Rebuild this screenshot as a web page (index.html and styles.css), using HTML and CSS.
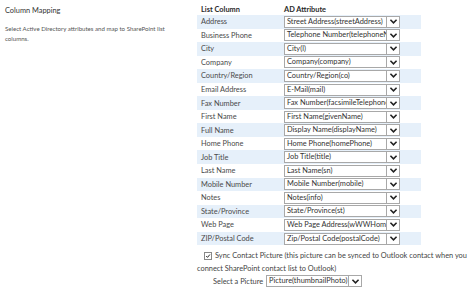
FILE: index.html
```html
<!DOCTYPE html>
<html>
<head>
<meta charset="utf-8">
<link rel="stylesheet" href="styles.css">
</head>
<body>
<div class="page">
  <div class="left">
    <div class="title">Column Mapping</div>
    <div class="desc">Select Active Directory attributes and map to SharePoint list columns.</div>
  </div>
  <div class="right">
    <div class="grid">
      <div class="row head"><div class="col">List Column</div><div class="attr">AD Attribute</div></div>
      <div class="row alt"><div class="col">Address</div><div class="sel"><span class="val">Street Address(streetAddress)</span><span class="btn"><svg viewBox="0 0 10 8" width="9" height="7"><path d="M1.5 2 L5 5.5 L8.5 2" fill="none" stroke="#222" stroke-width="1.8"/></svg></span></div></div>
      <div class="row"><div class="col">Business Phone</div><div class="sel"><span class="val">Telephone Number(telephoneNumber)</span><span class="btn"><svg viewBox="0 0 10 8" width="9" height="7"><path d="M1.5 2 L5 5.5 L8.5 2" fill="none" stroke="#222" stroke-width="1.8"/></svg></span></div></div>
      <div class="row alt"><div class="col">City</div><div class="sel"><span class="val">City(l)</span><span class="btn"><svg viewBox="0 0 10 8" width="9" height="7"><path d="M1.5 2 L5 5.5 L8.5 2" fill="none" stroke="#222" stroke-width="1.8"/></svg></span></div></div>
      <div class="row"><div class="col">Company</div><div class="sel"><span class="val">Company(company)</span><span class="btn"><svg viewBox="0 0 10 8" width="9" height="7"><path d="M1.5 2 L5 5.5 L8.5 2" fill="none" stroke="#222" stroke-width="1.8"/></svg></span></div></div>
      <div class="row alt"><div class="col">Country/Region</div><div class="sel"><span class="val">Country/Region(co)</span><span class="btn"><svg viewBox="0 0 10 8" width="9" height="7"><path d="M1.5 2 L5 5.5 L8.5 2" fill="none" stroke="#222" stroke-width="1.8"/></svg></span></div></div>
      <div class="row"><div class="col">Email Address</div><div class="sel"><span class="val">E-Mail(mail)</span><span class="btn"><svg viewBox="0 0 10 8" width="9" height="7"><path d="M1.5 2 L5 5.5 L8.5 2" fill="none" stroke="#222" stroke-width="1.8"/></svg></span></div></div>
      <div class="row alt"><div class="col">Fax Number</div><div class="sel"><span class="val">Fax Number(facsimileTelephoneNumber)</span><span class="btn"><svg viewBox="0 0 10 8" width="9" height="7"><path d="M1.5 2 L5 5.5 L8.5 2" fill="none" stroke="#222" stroke-width="1.8"/></svg></span></div></div>
      <div class="row"><div class="col">First Name</div><div class="sel"><span class="val">First Name(givenName)</span><span class="btn"><svg viewBox="0 0 10 8" width="9" height="7"><path d="M1.5 2 L5 5.5 L8.5 2" fill="none" stroke="#222" stroke-width="1.8"/></svg></span></div></div>
      <div class="row alt"><div class="col">Full Name</div><div class="sel"><span class="val">Display Name(displayName)</span><span class="btn"><svg viewBox="0 0 10 8" width="9" height="7"><path d="M1.5 2 L5 5.5 L8.5 2" fill="none" stroke="#222" stroke-width="1.8"/></svg></span></div></div>
      <div class="row"><div class="col">Home Phone</div><div class="sel"><span class="val">Home Phone(homePhone)</span><span class="btn"><svg viewBox="0 0 10 8" width="9" height="7"><path d="M1.5 2 L5 5.5 L8.5 2" fill="none" stroke="#222" stroke-width="1.8"/></svg></span></div></div>
      <div class="row alt"><div class="col">Job Title</div><div class="sel"><span class="val">Job Title(title)</span><span class="btn"><svg viewBox="0 0 10 8" width="9" height="7"><path d="M1.5 2 L5 5.5 L8.5 2" fill="none" stroke="#222" stroke-width="1.8"/></svg></span></div></div>
      <div class="row"><div class="col">Last Name</div><div class="sel"><span class="val">Last Name(sn)</span><span class="btn"><svg viewBox="0 0 10 8" width="9" height="7"><path d="M1.5 2 L5 5.5 L8.5 2" fill="none" stroke="#222" stroke-width="1.8"/></svg></span></div></div>
      <div class="row alt"><div class="col">Mobile Number</div><div class="sel"><span class="val">Mobile Number(mobile)</span><span class="btn"><svg viewBox="0 0 10 8" width="9" height="7"><path d="M1.5 2 L5 5.5 L8.5 2" fill="none" stroke="#222" stroke-width="1.8"/></svg></span></div></div>
      <div class="row"><div class="col">Notes</div><div class="sel"><span class="val">Notes(info)</span><span class="btn"><svg viewBox="0 0 10 8" width="9" height="7"><path d="M1.5 2 L5 5.5 L8.5 2" fill="none" stroke="#222" stroke-width="1.8"/></svg></span></div></div>
      <div class="row alt"><div class="col">State/Province</div><div class="sel"><span class="val">State/Province(st)</span><span class="btn"><svg viewBox="0 0 10 8" width="9" height="7"><path d="M1.5 2 L5 5.5 L8.5 2" fill="none" stroke="#222" stroke-width="1.8"/></svg></span></div></div>
      <div class="row"><div class="col">Web Page</div><div class="sel"><span class="val">Web Page Address(wWWHomePage)</span><span class="btn"><svg viewBox="0 0 10 8" width="9" height="7"><path d="M1.5 2 L5 5.5 L8.5 2" fill="none" stroke="#222" stroke-width="1.8"/></svg></span></div></div>
      <div class="row alt"><div class="col">ZIP/Postal Code</div><div class="sel"><span class="val">Zip/Postal Code(postalCode)</span><span class="btn"><svg viewBox="0 0 10 8" width="9" height="7"><path d="M1.5 2 L5 5.5 L8.5 2" fill="none" stroke="#222" stroke-width="1.8"/></svg></span></div></div>
    </div>
    <div class="sync">
      <div class="syncline"><span class="check"><svg viewBox="0 0 10 10" width="8" height="8"><path d="M2 5 L4.2 7.3 L8.2 2.5" fill="none" stroke="#222" stroke-width="1.6"/></svg></span><span>Sync Contact Picture (this picture can be synced to Outlook contact when you</span></div>
      <div class="syncline2">connect SharePoint contact list to Outlook)</div>
      <div class="picline"><span class="piclabel">Select a Picture</span><div class="sel small"><span class="val">Picture(thumbnailPhoto)</span><span class="btn"><svg viewBox="0 0 10 8" width="9" height="7"><path d="M1.5 2 L5 5.5 L8.5 2" fill="none" stroke="#222" stroke-width="1.8"/></svg></span></div></div>
    </div>
  </div>
</div>
</body>
</html>
```
FILE: styles.css
```css
html, body { margin: 0; padding: 0; background: #fff; }
body {
  font-family: "Lato", "Open Sans", sans-serif;
  font-size: 7.4px;
  color: #444;
  width: 474px;
  height: 289px;
  overflow: hidden;
}
.page { display: flex; }
.left { width: 176px; padding: 6px 0 0 5px; }
.title { font-size: 7.4px; color: #333; }
.desc { margin-top: 9px; font-size: 6.1px; line-height: 10px; color: #555; }
.right { margin-left: 16px; width: 277px; }
.grid { width: 224px; padding-top: 3px; }
.row { display: flex; align-items: center; height: 13.55px; padding-left: 4px; }
.row.alt { background: #e6f0fa; }
.row.head { height: 12px; font-weight: bold; color: #333; }
.col { width: 83px; color: #4a4a4a; }
.head .col, .head .attr { color: #2a2a2a; }
.sel {
  display: flex;
  align-items: stretch;
  width: 116px;
  height: 12px;
  border: 1px solid #a8a8a8;
  background: #fff;
  box-sizing: border-box;
}
.val {
  flex: 1;
  overflow: hidden;
  white-space: nowrap;
  padding-left: 2px;
  line-height: 10px;
  color: #333;
}
.btn {
  width: 12px;
  border-left: 1px solid #a8a8a8;
  display: flex;
  align-items: center;
  justify-content: center;
  background: #fff;
}
.sync { padding-top: 4px; color: #444; }
.syncline { display: flex; align-items: center; gap: 3px; padding-left: 7px; height: 13px; white-space: nowrap; }
.check { width: 8px; height: 8px; border: 1px solid #888; display: flex; align-items: center; justify-content: center; box-sizing: border-box; }
.syncline2 { height: 13px; line-height: 13px; white-space: nowrap; }
.picline { display: flex; align-items: center; gap: 3px; padding-left: 16px; height: 12px; }
.sel.small { width: 96px; }
```
